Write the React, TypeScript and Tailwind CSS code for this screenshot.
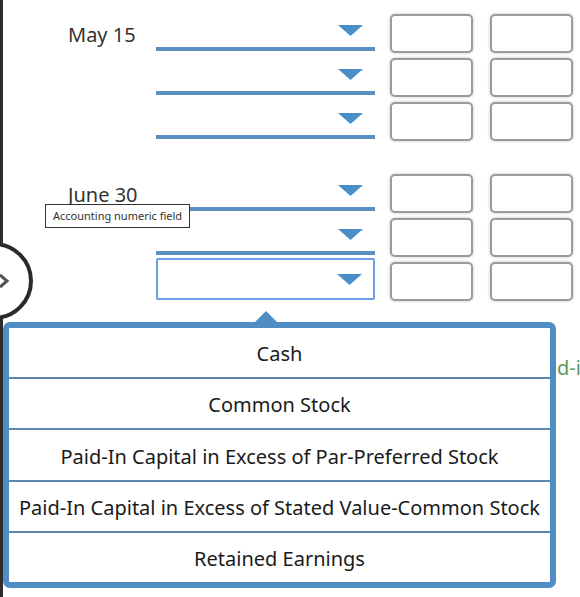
const font = { fontFamily: '"Noto Sans", "Open Sans", sans-serif' };

const options = [
  "Cash",
  "Common Stock",
  "Paid-In Capital in Excess of Par-Preferred Stock",
  "Paid-In Capital in Excess of Stated Value-Common Stock",
  "Retained Earnings",
];

function Caret() {
  return (
    <svg width="25" height="11" viewBox="0 0 25 11">
      <polygon points="0,0 25,0 12.5,11" fill="#4a8ec9" />
    </svg>
  );
}

function AmountBox() {
  return (
    <div className="w-[83px] h-[39px] rounded-[5px] border-2 border-[#9b9b9b] bg-white shadow-[0_0_3px_rgba(0,0,0,0.25)]" />
  );
}

function Row({ label, focused }: { label?: string; focused?: boolean }) {
  return (
    <div className="flex h-[39px] items-start">
      <div className="w-[156px] pl-[68px] pt-[8px] text-[20px] leading-[26px] text-[#333] whitespace-nowrap">
        {label}
      </div>
      {focused ? (
        <div className="w-[219px] h-[42px] -mt-[4px] border-2 border-[#6b9fe3] rounded-[2px] flex justify-end items-center pr-[11px]">
          <Caret />
        </div>
      ) : (
        <div className="w-[219px] h-[37px] border-b-4 border-[#5a8fc2] flex justify-end items-center pr-[12px]">
          <Caret />
        </div>
      )}
      <div className="ml-[15px]">
        <AmountBox />
      </div>
      <div className="ml-[17px]">
        <AmountBox />
      </div>
    </div>
  );
}

export default function App() {
  return (
    <div className="relative w-[580px] h-[597px] overflow-hidden bg-white" style={font}>
      <div className="pt-[14px] flex flex-col">
        <div className="flex flex-col gap-[5px]">
          <Row label="May 15" />
          <Row />
          <Row />
        </div>
        <div className="mt-[33px] flex flex-col gap-[5px]">
          <Row label="June 30" />
          <Row />
          <Row focused />
        </div>
      </div>

      {/* left rail + collapse handle */}
      <div className="absolute left-0 top-0 w-[3px] h-full bg-[#2d2d2d]" />
      <div className="absolute left-[-45px] top-[242px] w-[78px] h-[78px] rounded-full border-4 border-[#2a2a2a] bg-white" />
      <svg className="absolute left-0 top-[273px]" width="10" height="16" viewBox="0 0 10 16">
        <polyline points="0,2 7,8 0,14" fill="none" stroke="#555" strokeWidth="3" />
      </svg>

      {/* tooltip */}
      <div className="absolute left-[45px] top-[204px] h-[24px] px-[7px] border border-[#333] bg-white text-[11px] leading-[22px] text-[#333] whitespace-nowrap">
        Accounting numeric field
      </div>

      {/* text behind the menu */}
      <div className="absolute left-[557px] top-[355px] text-[20px] leading-[26px] text-[#5c9b5c] whitespace-nowrap">
        d-in
      </div>

      {/* dropdown menu */}
      <svg className="absolute left-[253px] top-[311px]" width="26" height="13" viewBox="0 0 26 13">
        <polygon points="0,13 13,0 26,13" fill="#4f8dc4" />
      </svg>
      <div className="absolute left-[3px] top-[322px] w-[553px] h-[266px] rounded-[7px] border-[6px] border-[#4f8dc4] bg-white flex flex-col">
        {options.map((o, i) => (
          <div
            key={o}
            className={`flex-1 flex items-center justify-center pt-[3px] text-[20px] text-[#1a1a1a] whitespace-nowrap ${
              i < options.length - 1 ? "border-b-2 border-[#5b88ae]" : ""
            }`}
          >
            {o}
          </div>
        ))}
      </div>
    </div>
  );
}
